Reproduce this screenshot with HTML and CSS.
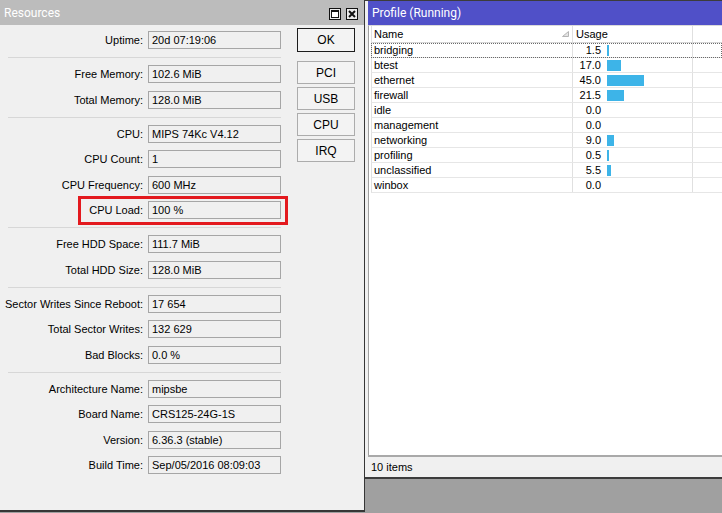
FILE: index.html
```html
<!DOCTYPE html>
<html>
<head>
<meta charset="utf-8">
<title>Resources</title>
<link rel="stylesheet" href="styles.css">
</head>
<body>
<div class="desktop">
  <section class="win res">
    <header class="titlebar">
      <span class="title">Resources</span>
      <span class="tb-btns">
        <svg class="tb-icon" width="12" height="12" viewBox="0 0 12 12"><rect x="0.5" y="0.5" width="11" height="11" fill="#ececec" stroke="#111"/><rect x="2.5" y="2.5" width="7" height="7" fill="#fff" stroke="#111"/><rect x="2" y="2" width="8" height="2" fill="#111"/></svg>
        <svg class="tb-icon" width="12" height="12" viewBox="0 0 12 12"><rect x="0.5" y="0.5" width="11" height="11" fill="#ececec" stroke="#111"/><path d="M3 3 L9 9 M9 3 L3 9" stroke="#111" stroke-width="2"/></svg>
      </span>
    </header>
    <div class="res-body">
      <div class="form">
        <div class="group">
          <div class="row"><span class="label">Uptime:</span><span class="field">20d 07:19:06</span></div>
        </div>
        <div class="sep"></div>
        <div class="group">
          <div class="row"><span class="label">Free Memory:</span><span class="field">102.6 MiB</span></div>
          <div class="row"><span class="label">Total Memory:</span><span class="field">128.0 MiB</span></div>
        </div>
        <div class="sep"></div>
        <div class="group">
          <div class="row"><span class="label">CPU:</span><span class="field">MIPS 74Kc V4.12</span></div>
          <div class="row"><span class="label">CPU Count:</span><span class="field">1</span></div>
          <div class="row"><span class="label">CPU Frequency:</span><span class="field">600 MHz</span></div>
          <div class="row"><span class="label">CPU Load:</span><span class="field">100 %</span></div>
        </div>
        <div class="sep"></div>
        <div class="group">
          <div class="row"><span class="label">Free HDD Space:</span><span class="field">111.7 MiB</span></div>
          <div class="row"><span class="label">Total HDD Size:</span><span class="field">128.0 MiB</span></div>
        </div>
        <div class="sep"></div>
        <div class="group">
          <div class="row"><span class="label">Sector Writes Since Reboot:</span><span class="field">17 654</span></div>
          <div class="row"><span class="label">Total Sector Writes:</span><span class="field">132 629</span></div>
          <div class="row"><span class="label">Bad Blocks:</span><span class="field">0.0 %</span></div>
        </div>
        <div class="sep"></div>
        <div class="group">
          <div class="row"><span class="label">Architecture Name:</span><span class="field">mipsbe</span></div>
          <div class="row"><span class="label">Board Name:</span><span class="field">CRS125-24G-1S</span></div>
          <div class="row"><span class="label">Version:</span><span class="field">6.36.3 (stable)</span></div>
          <div class="row"><span class="label">Build Time:</span><span class="field">Sep/05/2016 08:09:03</span></div>
        </div>
      </div>
      <div class="buttons">
        <button class="btn default">OK</button>
        <button class="btn">PCI</button>
        <button class="btn">USB</button>
        <button class="btn">CPU</button>
        <button class="btn">IRQ</button>
      </div>
    </div>
    <div class="highlight"></div>
  </section>

  <section class="win prof">
    <header class="titlebar">
      <span class="title">Profile (Running)</span>
    </header>
    <div class="list">
      <div class="thead">
        <div class="c1 hcell"><span>Name</span><svg class="sort" width="7" height="6" viewBox="0 0 7 6"><path d="M0.5 5.5 L6.5 0.5 L6.5 5.5 Z" fill="#e4e4e4" stroke="#b4b4b4"/></svg></div>
        <div class="c2 hcell">Usage</div>
        <div class="c3"></div>
      </div>
      <div class="tr focus"><div class="c1">bridging</div><div class="c2"><span class="num">1.5</span><span class="bar" style="width:2px"></span></div><div class="c3"></div></div>
      <div class="tr"><div class="c1">btest</div><div class="c2"><span class="num">17.0</span><span class="bar" style="width:14px"></span></div><div class="c3"></div></div>
      <div class="tr"><div class="c1">ethernet</div><div class="c2"><span class="num">45.0</span><span class="bar" style="width:37px"></span></div><div class="c3"></div></div>
      <div class="tr"><div class="c1">firewall</div><div class="c2"><span class="num">21.5</span><span class="bar" style="width:17px"></span></div><div class="c3"></div></div>
      <div class="tr"><div class="c1">idle</div><div class="c2"><span class="num">0.0</span></div><div class="c3"></div></div>
      <div class="tr"><div class="c1">management</div><div class="c2"><span class="num">0.0</span></div><div class="c3"></div></div>
      <div class="tr"><div class="c1">networking</div><div class="c2"><span class="num">9.0</span><span class="bar" style="width:7px"></span></div><div class="c3"></div></div>
      <div class="tr"><div class="c1">profiling</div><div class="c2"><span class="num">0.5</span><span class="bar" style="width:2px"></span></div><div class="c3"></div></div>
      <div class="tr"><div class="c1">unclassified</div><div class="c2"><span class="num">5.5</span><span class="bar" style="width:4px"></span></div><div class="c3"></div></div>
      <div class="tr"><div class="c1">winbox</div><div class="c2"><span class="num">0.0</span></div><div class="c3"></div></div>
    </div>
    <footer class="status">10 items</footer>
  </section>
</div>
</body>
</html>
```

FILE: styles.css
```css
html, body {
  margin: 0;
  padding: 0;
}

body {
  background: #a0a0a0;
  font-family: "Liberation Sans", Arial, sans-serif;
  font-size: 11px;
  color: #000;
}

.desktop {
  display: flex;
  align-items: flex-start;
  width: 722px;
  height: 513px;
  overflow: hidden;
}

.win {
  background: #f0f0f0;
  box-sizing: content-box;
  display: flex;
  flex-direction: column;
}

/* ---------- Resources window ---------- */
.res {
  position: relative;
  flex: none;
  width: 364px;
  height: 510px;
  border-right: 1px solid #363636;
  border-bottom: 2px solid #363636;
}

.titlebar {
  display: flex;
  align-items: center;
  justify-content: space-between;
  flex: none;
  box-sizing: border-box;
  font-family: Roboto, "Liberation Sans", sans-serif;
  font-size: 12px;
  color: #fff;
}

.res .titlebar {
  height: 25px;
  background: #bcbcbc;
  padding: 0 6px 0 4px;
}

.tb-btns {
  display: flex;
  gap: 5px;
  margin-top: 3px;
}

.tb-icon {
  display: block;
}

.res-body {
  display: flex;
  align-items: flex-start;
}

.form {
  width: 281px;
  padding-top: 6px;
  flex: none;
}

.row {
  display: flex;
  align-items: center;
  height: 18px;
}

.row + .row {
  margin-top: 7.5px;
}

.label {
  width: 143px;
  margin-right: 5px;
  text-align: right;
  white-space: nowrap;
  flex: none;
}

.field {
  width: 133px;
  height: 18px;
  box-sizing: border-box;
  border: 1px solid #a6a6a6;
  padding-left: 3px;
  line-height: 16px;
  white-space: nowrap;
  flex: none;
}

.sep {
  margin: 8px 0 7px 8px;
  width: 273px;
  height: 1px;
  background: #d7d7d7;
}

.buttons {
  display: flex;
  flex-direction: column;
  width: 58px;
  margin-left: 16px;
  padding-top: 3px;
}

.btn {
  height: 23px;
  margin: 0 0 3px 0;
  padding: 0;
  box-sizing: border-box;
  border: 1px solid #acacac;
  background: #f3f3f3;
  font-family: "Liberation Sans", Arial, sans-serif;
  font-size: 12px;
  color: #000;
  display: flex;
  align-items: center;
  justify-content: center;
}

.btn.default {
  height: 24px;
  margin-bottom: 9px;
  border-color: #1c1c1c;
}

.highlight {
  position: absolute;
  left: 78px;
  top: 196px;
  width: 210px;
  height: 29px;
  box-sizing: border-box;
  border: 3px solid #e3191e;
}

/* ---------- Profile window ---------- */
.prof {
  flex: 1;
  height: 476px;
  border-top: 1px solid #3c3c3c;
  border-bottom: 2px solid #3c3c3c;
  padding-left: 3px;
}

.prof .titlebar {
  height: 24px;
  background: #5050c8;
  padding-left: 4px;
}

.list {
  flex: 1;
  background: #fff;
  border-left: 1px solid #a0a0a0;
  border-top: 1px solid #dadada;
  padding-left: 2px;
  overflow: hidden;
}

.thead,
.tr {
  display: flex;
  border-left: 1px solid #e0e0e0;
  white-space: nowrap;
}

.thead {
  height: 17px;
  box-sizing: border-box;
  border-bottom: 1px solid #d6d6d6;
  line-height: 16px;
}

.tr {
  height: 15px;
  box-sizing: border-box;
  border-bottom: 1px solid #e6e6e6;
  line-height: 14px;
}

.tr.focus {
  outline: 1px dotted #6a6a6a;
  outline-offset: -1px;
}

.c1 {
  width: 201px;
  flex: none;
  box-sizing: border-box;
  border-right: 1px solid #e0e0e0;
  padding-left: 2px;
}

.c2 {
  width: 120px;
  flex: none;
  box-sizing: border-box;
  border-right: 1px solid #e0e0e0;
  display: flex;
  align-items: center;
}

.c3 {
  flex: 1;
}

.hcell.c1 {
  display: flex;
  align-items: center;
  justify-content: space-between;
  padding-right: 3px;
}

.hcell.c2 {
  padding-left: 3px;
}

.sort {
  display: block;
}

.num {
  width: 28px;
  text-align: right;
  flex: none;
}

.bar {
  height: 11px;
  margin-left: 6px;
  background: #3db4e8;
  flex: none;
}

.status {
  flex: none;
  height: 20px;
  border-top: 2px solid #a9a9a9;
  padding-left: 3px;
  line-height: 20px;
  font-size: 11px;
}
```
